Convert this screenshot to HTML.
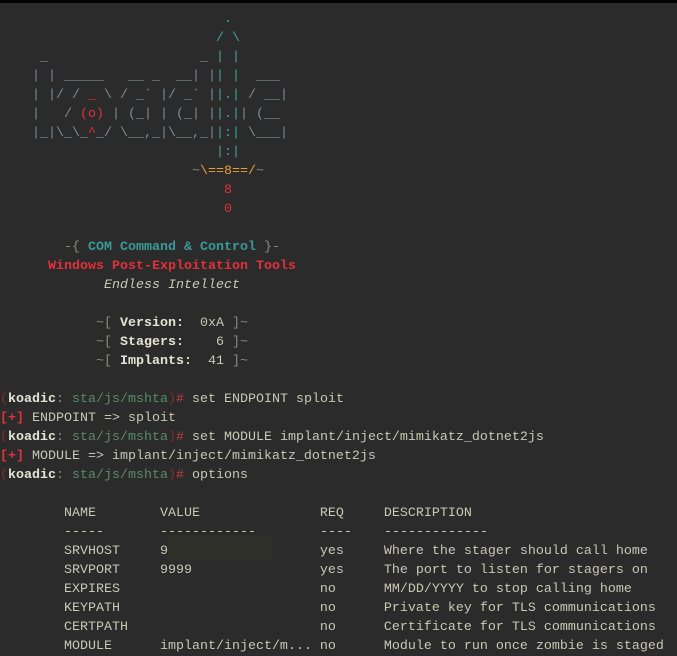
<!DOCTYPE html>
<html><head><meta charset="utf-8"><style>
html,body{margin:0;padding:0;background:#2b2b2b;width:677px;height:655px;overflow:hidden;}
.top{position:absolute;left:0;top:0;width:677px;height:3px;background:#000;}
pre{position:absolute;left:0;top:10px;margin:0;font-family:"Liberation Mono",monospace;font-size:13.33px;line-height:19px;color:#c8c8b4;white-space:pre;}
.a{color:#7d8c96}.t{color:#3fa59a}.r{color:#e0303a}.o{color:#e8a030}.g{color:#8a8a80}
.c{color:#3a9a9a;font-weight:bold}.b{color:#e4e4d4;font-weight:bold}.i{font-style:italic;color:#c8c8b4}
.p{color:#8c2a2a}.s{color:#5a8a6a}.h{color:#c04040}
.blur{position:absolute;left:168px;top:535px;width:104px;height:26px;background:#30302b;}
</style></head><body><div class="top"></div>
<pre><span class="t">                            .</span>
<span class="t">                           / \</span>
<span class="a">     _                   _ </span><span class="t">| |</span>
<span class="a">    | | _____   __ _  __| |</span><span class="t">| |</span><span class="a">  ___</span>
<span class="a">    | |/ / </span><span class="r">_</span><span class="a"> \ / _` |/ _` |</span><span class="t">|.|</span><span class="a"> / __|</span>
<span class="a">    |   / </span><span class="r">(o)</span><span class="a"> | (_| | (_| |</span><span class="t">|.|</span><span class="a">| (__</span>
<span class="a">    |_|\_\_</span><span class="r">^</span><span class="a">_/ \__,_|\__,_|</span><span class="t">|:|</span><span class="a"> \___|</span>
<span class="t">                           |:|</span>
<span class="g">                        ~</span><span class="o">\==8==/</span><span class="g">~</span>
<span class="r">                            8</span>
<span class="r">                            0</span>

<span class="g">        -{ </span><span class="c">COM Command &amp; Control</span><span class="g"> }-</span>
<span class="r" style="font-weight:bold">      Windows Post-Exploitation Tools</span>
<span class="i">             Endless Intellect</span>

<span class="g">            ~[ </span><span class="b">Version:</span>  0xA <span class="g">]~</span>
<span class="g">            ~[ </span><span class="b">Stagers:</span>    6 <span class="g">]~</span>
<span class="g">            ~[ </span><span class="b">Implants:</span>  41 <span class="g">]~</span>

<span class="p">(</span><span class="b">koadic</span><span class="g">: </span><span class="s">sta/js/mshta</span><span class="p">)</span><span class="h">#</span> set ENDPOINT sploit
<span class="r" style="font-weight:bold">[+]</span> ENDPOINT =&gt; sploit
<span class="p">(</span><span class="b">koadic</span><span class="g">: </span><span class="s">sta/js/mshta</span><span class="p">)</span><span class="h">#</span> set MODULE implant/inject/mimikatz_dotnet2js
<span class="r" style="font-weight:bold">[+]</span> MODULE =&gt; implant/inject/mimikatz_dotnet2js
<span class="p">(</span><span class="b">koadic</span><span class="g">: </span><span class="s">sta/js/mshta</span><span class="p">)</span><span class="h">#</span> options

        NAME        VALUE               REQ     DESCRIPTION
        -----       ------------        ----    -------------
        SRVHOST     9                   yes     Where the stager should call home
        SRVPORT     9999                yes     The port to listen for stagers on
        EXPIRES                         no      MM/DD/YYYY to stop calling home
        KEYPATH                         no      Private key for TLS communications
        CERTPATH                        no      Certificate for TLS communications
        MODULE      implant/inject/m... no      Module to run once zombie is staged</pre>
<div class="blur"></div>
</body></html>
